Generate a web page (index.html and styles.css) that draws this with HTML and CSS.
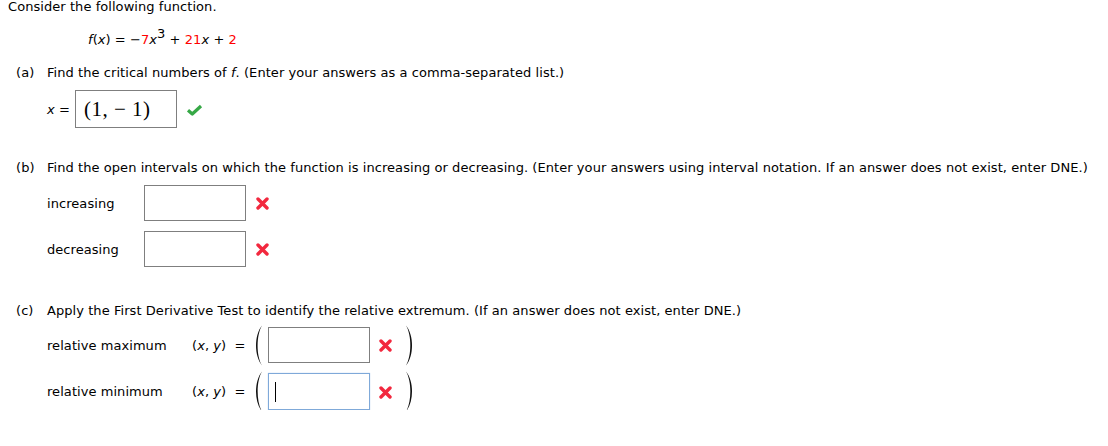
FILE: index.html
```html
<!DOCTYPE html>
<html>
<head>
<meta charset="utf-8">
<link rel="stylesheet" href="styles.css">
</head>
<body>
<div class="page">
  <p class="intro">Consider the following function.</p>
  <p class="func"><i>f</i>(<i>x</i>) = −<span class="red">7</span><i>x</i><sup>3</sup> + <span class="red">21</span><i>x</i> + <span class="red">2</span></p>

  <div class="part part-a"><span class="tag">(a)</span><span>Find the critical numbers of <i>f</i>. (Enter your answers as a comma-separated list.)</span></div>
  <div class="row row-a">
    <span class="xeq"><i>x</i> =</span>
    <div class="box box-a"><span class="math">(1, − 1)</span></div>
    <svg class="check" width="17" height="12" viewBox="0 0 17 12"><path d="M2 6.2 L6.3 10 L15 2" fill="none" stroke="#36a846" stroke-width="3.2" stroke-linejoin="round"/></svg>
  </div>

  <div class="part part-b"><span class="tag">(b)</span><span>Find the open intervals on which the function is increasing or decreasing. (Enter your answers using interval notation. If an answer does not exist, enter DNE.)</span></div>
  <div class="row row-inc">
    <span class="label lbl-b">increasing</span>
    <div class="box"></div>
    <svg class="cross" width="13" height="13" viewBox="0 0 13 13"><path d="M2 2 L11 11 M11 2 L2 11" stroke="#f2283e" stroke-width="3.4" stroke-linecap="round"/></svg>
  </div>
  <div class="row row-dec">
    <span class="label lbl-b">decreasing</span>
    <div class="box"></div>
    <svg class="cross" width="13" height="13" viewBox="0 0 13 13"><path d="M2 2 L11 11 M11 2 L2 11" stroke="#f2283e" stroke-width="3.4" stroke-linecap="round"/></svg>
  </div>

  <div class="part part-c"><span class="tag">(c)</span><span>Apply the First Derivative Test to identify the relative extremum. (If an answer does not exist, enter DNE.)</span></div>
  <div class="row row-max">
    <span class="label lbl-c">relative maximum</span>
    <span class="xy">(<i>x</i>, <i>y</i>)&nbsp; =</span>
    <svg class="paren" width="10" height="41" viewBox="0 0 10 41"><path d="M9 0.5 C1 10 1 31 9 40.5 C3.2 31 3.2 10 9 0.5 Z" fill="#111"/></svg>
    <div class="box"></div>
    <svg class="cross cross-c" width="13" height="13" viewBox="0 0 13 13"><path d="M2 2 L11 11 M11 2 L2 11" stroke="#f2283e" stroke-width="3.4" stroke-linecap="round"/></svg>
    <svg class="paren paren-r" width="10" height="41" viewBox="0 0 10 41"><path d="M1 0.5 C9 10 9 31 1 40.5 C6.8 31 6.8 10 1 0.5 Z" fill="#111"/></svg>
  </div>
  <div class="row row-min">
    <span class="label lbl-c">relative minimum</span>
    <span class="xy">(<i>x</i>, <i>y</i>)&nbsp; =</span>
    <svg class="paren" width="10" height="41" viewBox="0 0 10 41"><path d="M9 0.5 C1 10 1 31 9 40.5 C3.2 31 3.2 10 9 0.5 Z" fill="#111"/></svg>
    <div class="box box-focus"><span class="caret"></span></div>
    <svg class="cross cross-c" width="13" height="13" viewBox="0 0 13 13"><path d="M2 2 L11 11 M11 2 L2 11" stroke="#f2283e" stroke-width="3.4" stroke-linecap="round"/></svg>
    <svg class="paren paren-r" width="10" height="41" viewBox="0 0 10 41"><path d="M1 0.5 C9 10 9 31 1 40.5 C6.8 31 6.8 10 1 0.5 Z" fill="#111"/></svg>
  </div>
</div>
</body>
</html>
```

FILE: styles.css
```css
html, body {
  margin: 0;
  padding: 0;
  background: #fff;
}
body {
  font-family: "DejaVu Sans", Verdana, sans-serif;
  font-size: 13px;
  letter-spacing: 0.06px;
  color: #000;
}
.page {
  padding: 0 8px;
}
p {
  margin: 0;
}
.intro {
  line-height: 14px;
}
.func {
  margin-top: 18px;
  margin-left: 80px;
  line-height: 16px;
}
.red {
  color: #f00;
}
sup {
  font-size: 13px;
  line-height: 0;
  vertical-align: 6px;
}
.part {
  display: flex;
  margin-left: 8px;
  line-height: 16px;
}
.tag {
  width: 31px;
  flex: none;
}
.part-a { margin-top: 17px; }
.part-b { margin-top: 32px; }
.part-c { margin-top: 36px; }

.row {
  display: flex;
  align-items: center;
  margin-left: 39px;
  height: 36px;
}
.row-a { margin-top: 9px; height: 38px; }
.row-inc { margin-top: 9px; }
.row-dec { margin-top: 10px; }
.row-max { margin-top: 8px; }
.row-min { margin-top: 10px; height: 37px; }

.xeq {
  width: 28px;
  flex: none;
}
.box {
  box-sizing: border-box;
  width: 102px;
  height: 100%;
  border: 1px solid #7f7f7f;
  background: #fff;
  flex: none;
  display: flex;
  align-items: center;
}
.box-a {
  padding-left: 8px;
}
.math {
  font-family: "Liberation Serif", "Times New Roman", serif;
  font-size: 21px;
  letter-spacing: 0.5px;
}
.check {
  margin-left: 9px;
  margin-top: 2px;
}
.cross {
  margin-left: 10px;
  margin-top: 1px;
}
.lbl-b {
  width: 97px;
  flex: none;
}
.lbl-c {
  width: 145px;
  flex: none;
}
.xy {
  width: 61px;
  flex: none;
}
.paren {
  flex: none;
  margin-right: 5px;
}
.paren-r {
  margin-left: 13px;
  margin-right: 0;
}
.cross-c {
  margin-left: 9px;
}
.box-focus {
  border-color: #7fa9d9;
  box-shadow: 0 0 1px #a9c8ec;
  padding-left: 6px;
}
.caret {
  display: block;
  width: 1px;
  height: 20px;
  background: #000;
}
```
